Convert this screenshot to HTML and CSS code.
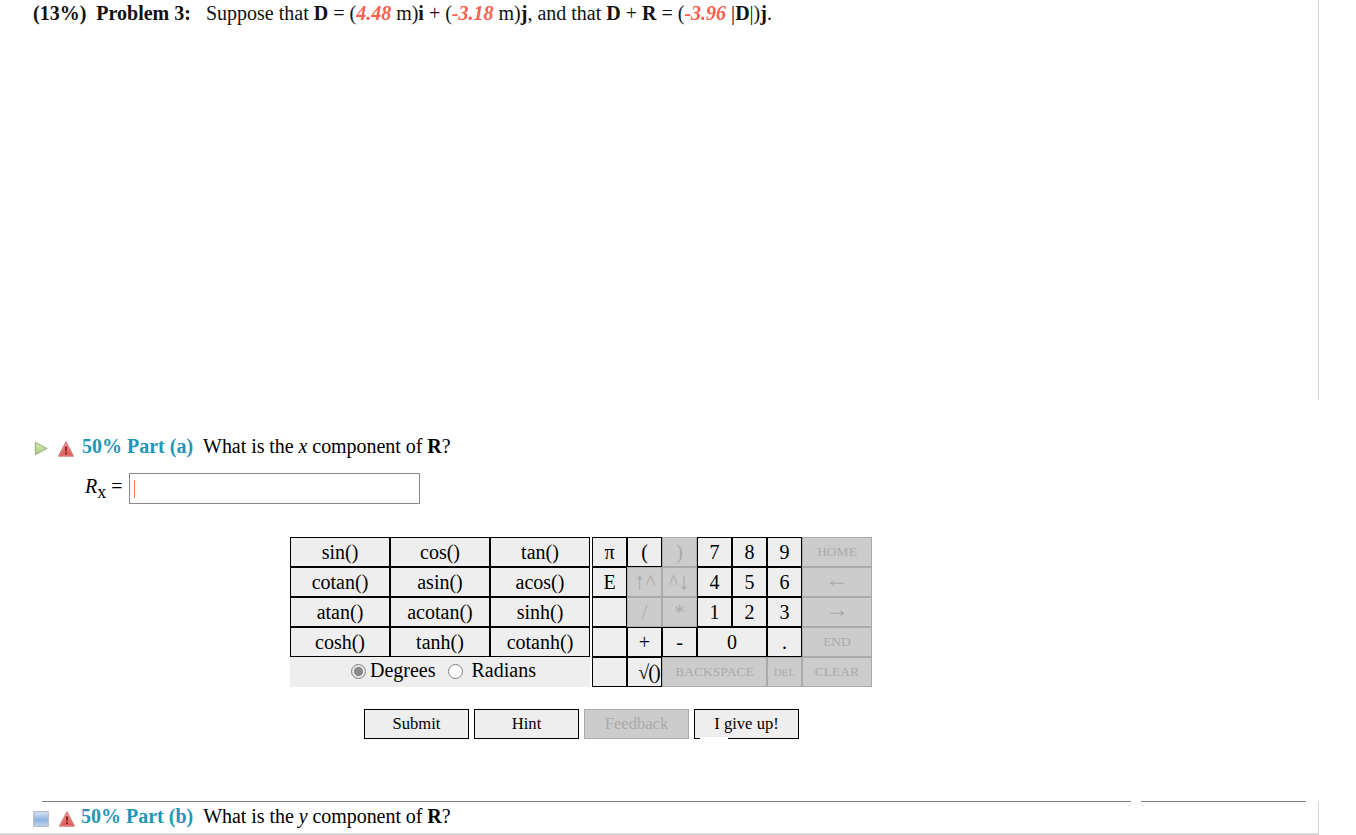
FILE: index.html
```html
<!DOCTYPE html>
<html lang="en">
<head>
<meta charset="utf-8">
<title>Problem 3</title>
<link rel="stylesheet" href="styles.css">
</head>
<body>
<svg class="defs" width="0" height="0" aria-hidden="true"><defs>
  <linearGradient id="warnfill" x1="0" y1="0" x2="0" y2="1"><stop offset="0" stop-color="#f4b3b0"/><stop offset=".6" stop-color="#e56a68"/><stop offset="1" stop-color="#dd5f5f"/></linearGradient>
  <linearGradient id="arrowfill" x1="0" y1="0" x2="0" y2="1"><stop offset="0" stop-color="#dcebb8"/><stop offset="1" stop-color="#a9cc74"/></linearGradient>
  <linearGradient id="boxfill" x1="0" y1="0" x2="0" y2="1"><stop offset="0" stop-color="#dbe6f4"/><stop offset=".55" stop-color="#8db3e2"/><stop offset="1" stop-color="#c2d6ee"/></linearGradient>
</defs></svg>
<section class="statement">
  <p class="problem"><b>(13%)&nbsp; Problem 3:</b>&nbsp;&nbsp; Suppose that <b>D</b> = (<i class="given">4.48</i> m)<b>i</b> + (<i class="given">-3.18</i> m)<b>j</b>, and that <b>D</b> + <b>R</b> = (<i class="given">-3.96</i> |<b>D</b>|)<b>j</b>.</p>
</section>

<section class="part-a">
  <h2 class="part-head">
    <svg class="ico-arrow" viewBox="0 0 14 15"><path d="M1.5 1.5 L12.8 7.5 L1.5 13.5 Z" fill="url(#arrowfill)" stroke="#a5b88c" stroke-width="1.4" stroke-linejoin="round"/></svg>
    <svg class="ico-warn" viewBox="0 0 16 16"><path d="M8 1 L15.3 15 L.7 15 Z" fill="url(#warnfill)" stroke="#d77a7a" stroke-width="1.3" stroke-linejoin="round"/><path d="M7 5.5 h2 l-.4 5 h-1.2 Z M7.1 11.5 h1.8 v1.8 h-1.8 Z" fill="#7a1516"/></svg>
    <span class="pct">50% Part (a)</span>
    <span class="ask">What is the <i>x</i> component of <b>R</b>?</span>
  </h2>

  <div class="answer">
    <span class="label"><i>R</i><sub>x</sub> =</span>
    <div class="field"><span class="caret"></span></div>
  </div>

  <div class="keypad">
    <div class="funcs">
      <button class="key">sin()</button><button class="key">cos()</button><button class="key">tan()</button>
      <button class="key">cotan()</button><button class="key">asin()</button><button class="key">acos()</button>
      <button class="key">atan()</button><button class="key">acotan()</button><button class="key">sinh()</button>
      <button class="key">cosh()</button><button class="key">tanh()</button><button class="key">cotanh()</button>
      <div class="angle">
        <input type="radio" name="angle" class="radio" checked><span class="deg">Degrees</span>
        <input type="radio" name="angle" class="radio"><span class="rad">Radians</span>
      </div>
    </div>
    <div class="pad">
      <button class="key">π</button><button class="key">(</button><button class="key off">)</button><button class="key">7</button><button class="key">8</button><button class="key">9</button><button class="key off small">HOME</button>
      <button class="key">E</button><button class="key off"><span class="arw">↑</span>^</button><button class="key off">^<span class="arw">↓</span></button><button class="key">4</button><button class="key">5</button><button class="key">6</button><button class="key off small"><span class="arw">←</span></button>
      <button class="key"></button><button class="key off">/</button><button class="key off">*</button><button class="key">1</button><button class="key">2</button><button class="key">3</button><button class="key off small"><span class="arw">→</span></button>
      <button class="key"></button><button class="key">+</button><button class="key">-</button><button class="key two">0</button><button class="key">.</button><button class="key off small">END</button>
      <button class="key"></button><button class="key tight">√()</button><button class="key off small three">BACKSPACE</button><button class="key off tiny">DEL</button><button class="key off small">CLEAR</button>
    </div>
  </div>

  <div class="actions">
    <button class="act">Submit</button>
    <button class="act">Hint</button>
    <button class="act off">Feedback</button>
    <button class="act giveup">I give up!</button>
  </div>
</section>

<section class="part-b">
  <div class="rule"><span class="seg-a"></span><span class="seg-b"></span></div>
  <h2 class="part-head part-head-b">
    <svg class="ico-box" viewBox="0 0 16 16"><rect x=".7" y=".7" width="14.6" height="14.6" fill="url(#boxfill)" stroke="#b0bccb" stroke-width="1.2"/></svg>
    <svg class="ico-warn" viewBox="0 0 16 16"><path d="M8 1 L15.3 15 L.7 15 Z" fill="url(#warnfill)" stroke="#d77a7a" stroke-width="1.3" stroke-linejoin="round"/><path d="M7 5.5 h2 l-.4 5 h-1.2 Z M7.1 11.5 h1.8 v1.8 h-1.8 Z" fill="#7a1516"/></svg>
    <span class="pct">50% Part (b)</span>
    <span class="ask">What is the <i>y</i> component of <b>R</b>?</span>
  </h2>
</section>
</body>
</html>
```

FILE: styles.css
```css
* { box-sizing: border-box; }
html, body { margin: 0; padding: 0; background: #fff; }
body {
  width: 1356px;
  height: 835px;
  overflow: hidden;
  font-family: "Liberation Serif", "Times New Roman", serif;
  font-size: 20px;
  color: #000;
}
.defs { display: block; }
.statement {
  width: 1319px;
  height: 400px;
  border-right: 1px solid #d4d4d4;
  padding: 2px 0 0 33px;
}
.problem { margin: 0; line-height: 23px; font-size: 20px; color: #111; }
.given { color: #f9604f; font-weight: bold; }

.part-head {
  display: flex;
  align-items: center;
  margin: 0;
  font-size: 20px;
  font-weight: normal;
  line-height: 24px;
}
.part-a { padding-top: 34px; }
.part-a .part-head { padding-left: 34px; }
.ico-arrow { width: 14px; height: 15px; margin: 5px 0 0; }
.ico-warn { width: 16px; height: 16px; margin: 6px 7px 0 10px; }
.part-a .ico-warn { margin-left: 10px; margin-right: 8px; }
.ico-box { width: 16px; height: 16px; margin: 5px 0 0; }
.pct { font-weight: bold; color: #2196b6; margin-right: 10px; }
.ask { letter-spacing: -0.05px; }
.ask b { font-weight: bold; }

.answer {
  display: flex;
  align-items: center;
  margin: 15px 0 0 85px;
  height: 31px;
}
.label { width: 44px; font-size: 20px; white-space: nowrap; margin-top: -5px; }
.label sub { font-size: 18px; line-height: 0; vertical-align: -5px; }
.field {
  width: 291px;
  height: 31px;
  border: 1px solid #8a8a8a;
  padding: 6px 0 0 4px;
  background: #fff;
}
.caret { display: block; width: 1px; height: 18px; background: #f47b4f; }

.keypad {
  display: flex;
  gap: 2px;
  margin: 33px 0 0 290px;
}
.funcs {
  display: grid;
  grid-template-columns: repeat(3, 100px);
  grid-auto-rows: 30px;
  width: 300px;
}
.pad {
  display: grid;
  grid-template-columns: repeat(6, 35px) 70px;
  grid-auto-rows: 30px;
  width: 280px;
}
.key {
  margin: 0;
  padding: 0;
  border: 1px solid #000;
  background: #eee;
  font-family: inherit;
  font-size: 20px;
  line-height: 26px;
  color: #000;
  white-space: nowrap;
  overflow: visible;
}
.key.off { background: #ccc; border-color: #aaa; color: #aaa; }
.key.small { font-size: 13.5px; }
.key.tiny { font-size: 11px; }
.key.two { grid-column: span 2; }
.key.three { grid-column: span 3; }
.key.tight { letter-spacing: -1px; padding-left: 9px; }
.arw { font-size: 24px; line-height: 20px; }
.angle {
  grid-column: span 3;
  display: flex;
  align-items: center;
  background: #eee;
  padding: 0 0 4px 61px;
}
.radio {
  appearance: none;
  flex: none;
  width: 15px;
  height: 15px;
  margin: 2px 0 0;
  border: 1px solid #808080;
  border-radius: 50%;
  background: #fff;
}
.radio:checked {
  background: radial-gradient(circle, #8a8a8a 0 4.2px, #e6e6e6 4.8px);
}
.deg { margin-left: 4px; }
.deg + .radio { margin-left: 12px; }
.rad { margin-left: 9px; }

.actions {
  display: flex;
  gap: 5px;
  margin: 22px 0 0 364px;
}
.act {
  width: 105px;
  height: 30px;
  margin: 0;
  padding: 0;
  border: 1px solid #000;
  background: #eee;
  font-family: inherit;
  font-size: 16.6px;
  color: #000;
}
.act.off { background: #ccc; border-color: #aaa; color: #aaa; }
.giveup { position: relative; }
.giveup::after {
  content: "";
  position: absolute;
  left: 5px;
  bottom: -1px;
  width: 28px;
  height: 2px;
  background: #fff;
}

.part-b {
  position: relative;
  margin-top: 62px;
  width: 1319px;
  height: 34px;
  border-right: 1px solid #d4d4d4;
  border-bottom: 2px solid #d8d8d8;
}
.rule { display: flex; gap: 10px; padding-left: 42px; height: 1px; }
.seg-a { width: 1089px; background: #7d7d7d; }
.seg-b { width: 165px; background: #7d7d7d; }
.part-head-b { padding: 2px 0 0 33px; }
.part-head-b .ico-warn { margin: 6px 6px 0 10px; }
```
